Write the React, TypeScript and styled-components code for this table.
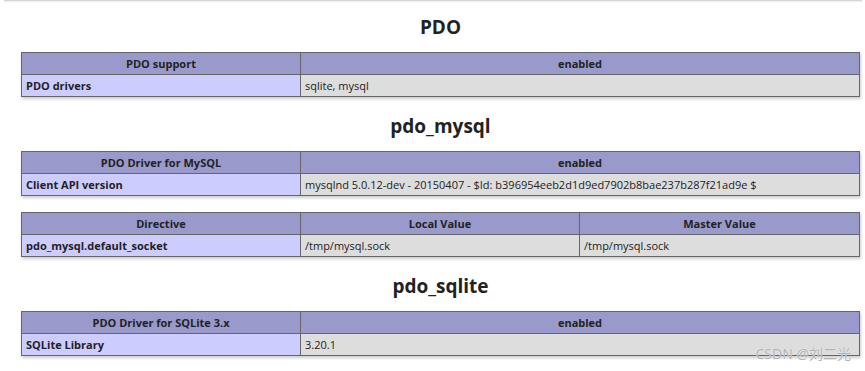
import styled, { createGlobalStyle } from 'styled-components';

type Row = string[];

type InfoTable = {
  head: Row;
  rows: Row[];
  widths: number[];
};

type Section = {
  title: string;
  tables: InfoTable[];
};

const sections: Section[] = [
  {
    title: 'PDO',
    tables: [
      {
        head: ['PDO support', 'enabled'],
        rows: [['PDO drivers', 'sqlite, mysql']],
        widths: [279],
      },
    ],
  },
  {
    title: 'pdo_mysql',
    tables: [
      {
        head: ['PDO Driver for MySQL', 'enabled'],
        rows: [
          [
            'Client API version',
            'mysqlnd 5.0.12-dev - 20150407 - $Id: b396954eeb2d1d9ed7902b8bae237b287f21ad9e $',
          ],
        ],
        widths: [279],
      },
      {
        head: ['Directive', 'Local Value', 'Master Value'],
        rows: [['pdo_mysql.default_socket', '/tmp/mysql.sock', '/tmp/mysql.sock']],
        widths: [279, 279],
      },
    ],
  },
  {
    title: 'pdo_sqlite',
    tables: [
      {
        head: ['PDO Driver for SQLite 3.x', 'enabled'],
        rows: [['SQLite Library', '3.20.1']],
        widths: [279],
      },
    ],
  },
];

const GlobalStyle = createGlobalStyle`
  html, body {
    margin: 0;
    padding: 0;
    background: #fff;
  }
  body {
    color: #222;
    font-family: "Open Sans", "Noto Sans CJK SC", sans-serif;
  }
`;

const App = () => (
  <Page>
    <GlobalStyle />
    <TopEdge />
    <Content>
      {sections.map(section => (
        <SectionBlock key={section.title}>
          <Title>{section.title}</Title>
          {section.tables.map((t, i) => (
            <Table key={i}>
              <colgroup>
                {t.widths.map((w, j) => (
                  <col key={j} style={{ width: w }} />
                ))}
                <col />
              </colgroup>
              <thead>
                <tr>
                  {t.head.map(h => (
                    <HeadCell key={h}>{h}</HeadCell>
                  ))}
                </tr>
              </thead>
              <tbody>
                {t.rows.map((r, k) => (
                  <tr key={k}>
                    {r.map((c, j) =>
                      j === 0 ? <KeyCell key={j}>{c}</KeyCell> : <ValueCell key={j}>{c}</ValueCell>,
                    )}
                  </tr>
                ))}
              </tbody>
            </Table>
          ))}
        </SectionBlock>
      ))}
    </Content>
    <Watermark>CSDN @刘二光</Watermark>
  </Page>
);

const Page = styled.div`
  position: relative;
  width: 865px;
  height: 371px;
  overflow: hidden;
`;

const TopEdge = styled.div`
  height: 1px;
  margin: 0 3px 0 4px;
  background: #d4d4d4;
  box-shadow: 0 1px 2px #e4e4e4;
`;

const Content = styled.div`
  display: flex;
  flex-direction: column;
  padding-left: 21px;
  width: 839px;
`;

const SectionBlock = styled.section`
  display: flex;
  flex-direction: column;
  gap: 16px;
  margin-top: 14px;

  & + & {
    margin-top: 17px;
  }
`;

const Title = styled.h2`
  margin: 0 0 -3px;
  font-size: 19px;
  line-height: 24px;
  font-weight: bold;
  text-align: center;
  color: #222;
`;

const Table = styled.table`
  width: 839px;
  border-collapse: collapse;
  table-layout: fixed;
  box-shadow: 1px 2px 3px #ccc;
`;

const Cell = styled.td`
  border: 1px solid #666;
  font-size: 11px;
  line-height: 13px;
  height: 13px;
  padding: 4px 4px;
  white-space: nowrap;
  overflow: hidden;
`;

const HeadCell = styled(Cell).attrs({ as: 'th' })`
  background: #99c;
  font-weight: bold;
  text-align: center;
`;

const KeyCell = styled(Cell)`
  background: #ccf;
  font-weight: bold;
`;

const ValueCell = styled(Cell)`
  background: #ddd;
`;

const Watermark = styled.div`
  position: absolute;
  right: 14px;
  bottom: 9px;
  font-size: 14px;
  line-height: 16px;
  color: rgba(165, 165, 165, 0.85);
  text-shadow: 0 0 1px #fff;
  font-family: "Noto Sans", "Noto Sans CJK SC", sans-serif;
`;

export default App;
